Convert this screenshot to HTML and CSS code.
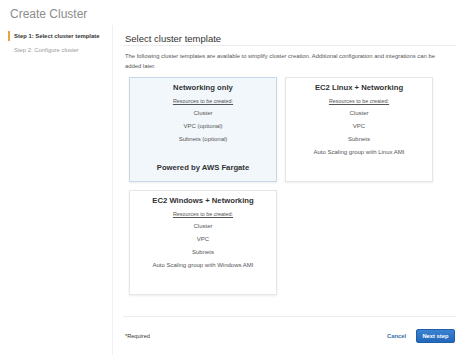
FILE: index.html
```html
<!DOCTYPE html>
<html lang="en">
<head>
  <meta charset="UTF-8" />
  <title>Create Cluster</title>
  <link rel="stylesheet" href="styles.css">
</head>
<body>
  <h1 class="page-title">Create Cluster</h1>

  <div class="layout">
    <!-- Wizard steps -->
    <nav class="steps">
      <ul>
        <li class="active">Step 1: Select cluster template</li>
        <li>Step 2: Configure cluster</li>
      </ul>
    </nav>

    <div class="main">
      <h2 class="section-title">Select cluster template</h2>
      <p class="intro">The following cluster templates are available to simplify cluster creation. Additional configuration and integrations can be added later.</p>

      <div class="templates">
        <div class="card selected">
          <div class="card-title">Networking only</div>
          <div class="card-sub">Resources to be created:</div>
          <div class="card-item">Cluster</div>
          <div class="card-item">VPC (optional)</div>
          <div class="card-item">Subnets (optional)</div>
          <div class="card-foot">Powered by AWS Fargate</div>
        </div>
        <div class="card">
          <div class="card-title">EC2 Linux + Networking</div>
          <div class="card-sub">Resources to be created:</div>
          <div class="card-item">Cluster</div>
          <div class="card-item">VPC</div>
          <div class="card-item">Subnets</div>
          <div class="card-item">Auto Scaling group with Linux AMI</div>
        </div>
        <div class="card">
          <div class="card-title">EC2 Windows + Networking</div>
          <div class="card-sub">Resources to be created:</div>
          <div class="card-item">Cluster</div>
          <div class="card-item">VPC</div>
          <div class="card-item">Subnets</div>
          <div class="card-item">Auto Scaling group with Windows AMI</div>
        </div>
      </div>

      <div class="footer">
        <span class="required">*Required</span>
        <div class="actions">
          <a href="#" class="cancel">Cancel</a>
          <button class="next">Next step</button>
        </div>
      </div>
    </div>
  </div>
</body>
</html>
```

FILE: styles.css
```css
body {
  font-family: "Liberation Sans", Arial, sans-serif;
  margin: 0;
  padding: 0;
  background-color: #fff;
  color: #444;
}

.page-title {
  margin: 0;
  padding: 5px 10px 0;
  height: 20px;
  font-size: 12px;
  font-weight: normal;
  line-height: 18px;
  color: #8c8c8c;
}

.layout {
  display: flex;
  min-height: 330px;
}

/* Steps sidebar */
.steps {
  width: 112px;
  border-right: 1px solid #f0f0f0;
  padding-top: 6px;
}

.steps ul {
  list-style: none;
  margin: 0;
  padding: 0 0 0 8px;
}

.steps li {
  font-size: 5.9px;
  line-height: 10px;
  padding-left: 4px;
  margin-bottom: 4px;
  color: #9a9a9a;
  border-left: 2px solid transparent;
}

.steps li.active {
  color: #333;
  font-weight: bold;
  border-left-color: #e8a33d;
}

/* Main area */
.main {
  width: 333px;
  margin-left: 10px;
}

.section-title {
  margin: 0;
  padding: 8px 0 1px 2px;
  font-size: 9.5px;
  font-weight: normal;
  line-height: 11px;
  color: #333;
  border-bottom: 1px solid #ececec;
}

.intro {
  margin: 5px 0 0 2px;
  padding-right: 12px;
  font-size: 5.85px;
  line-height: 10px;
  color: #555;
}

.templates {
  display: grid;
  grid-template-columns: 148px 148px;
  gap: 8px;
  margin: 6px 0 0 6px;
}

.card {
  height: 105px;
  box-sizing: border-box;
  display: flex;
  flex-direction: column;
  align-items: center;
  padding: 4px 6px 7px;
  background: #fff;
  border: 1px solid #e6e6e6;
  box-shadow: 0 1px 2px rgba(0, 0, 0, 0.08);
  text-align: center;
}

.card.selected {
  background: #f2f7fc;
  border-color: #c9d8e8;
}

.card-title {
  font-size: 7.7px;
  font-weight: bold;
  line-height: 12px;
  color: #333;
}

.card-sub {
  margin-top: 1px;
  font-size: 5.4px;
  line-height: 12px;
  text-decoration: underline;
  color: #555;
}

.card-item {
  font-size: 6px;
  line-height: 13px;
  color: #555;
}

.card-foot {
  margin-top: auto;
  font-size: 7.7px;
  font-weight: bold;
  line-height: 12px;
  color: #333;
}

/* Footer */
.footer {
  margin-top: 21px;
  border-top: 1px solid #ececec;
  padding: 12px 1px 0 2px;
  display: flex;
  align-items: center;
  justify-content: space-between;
}

.required {
  font-size: 5.6px;
  color: #333;
}

.actions {
  display: flex;
  align-items: center;
  gap: 10px;
}

.cancel {
  font-size: 5.8px;
  font-weight: bold;
  color: #3a6ea5;
  text-decoration: none;
}

.next {
  width: 39px;
  height: 14px;
  padding: 0;
  border: 1px solid #1f5fa8;
  border-radius: 2px;
  background: linear-gradient(#3a82d2, #2367b8);
  color: #fff;
  font-family: inherit;
  font-size: 5.8px;
  font-weight: bold;
  cursor: pointer;
}
```
